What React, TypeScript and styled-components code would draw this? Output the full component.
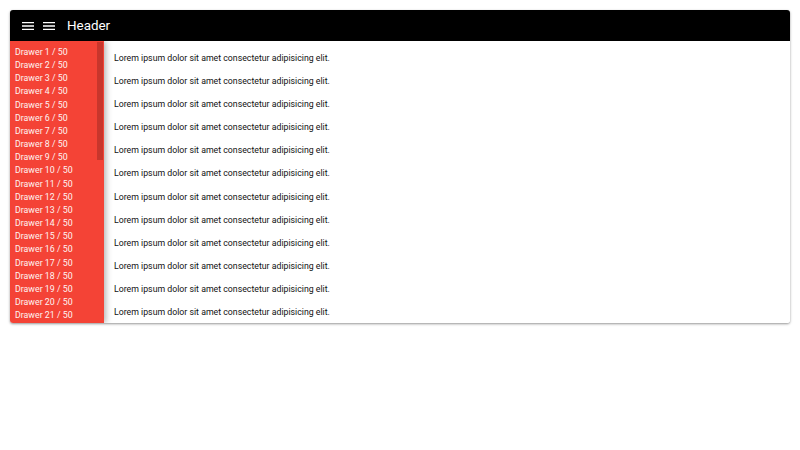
import React from "react";
import styled, { createGlobalStyle } from "styled-components";

const Global = createGlobalStyle`
  html, body { margin: 0; padding: 0; background: #fff; }
  body { font-family: Roboto, "Liberation Sans", sans-serif; }
`;

const Page = styled.div`
  padding: 10px;
`;

const Frame = styled.div`
  height: 313px;
  display: flex;
  flex-direction: column;
  border-radius: 3px;
  overflow: hidden;
  box-shadow: 0 1px 3px rgba(0,0,0,0.25), 0 1px 2px rgba(0,0,0,0.2);
`;

const Header = styled.header`
  height: 31px;
  flex: none;
  background: #000;
  color: #fff;
  display: flex;
  align-items: center;
  padding-left: 10px;
  gap: 5px;
`;

const IconBtn = styled.span`
  width: 16px;
  height: 16px;
  display: flex;
  align-items: center;
  justify-content: center;
`;

const Title = styled.h1`
  margin: 0 0 0 5px;
  font-size: 13.4px;
  font-weight: 400;
  line-height: 1;
`;

const Body = styled.div`
  flex: 1;
  display: flex;
  min-height: 0;
`;

const DrawerWrap = styled.div`
  width: 94px;
  flex: none;
  position: relative;
  z-index: 1;
  box-shadow: 2px 0 6px rgba(0,0,0,0.3);
`;

const Drawer = styled.nav`
  height: 100%;
  background: #f44336;
  color: #fdf3f2;
  overflow-y: auto;
  scrollbar-width: none;
  padding: 5px 0 4px 5px;
  box-sizing: border-box;
  &::-webkit-scrollbar { display: none; }
`;

const Thumb = styled.div`
  position: absolute;
  top: 1px;
  right: 1px;
  width: 6px;
  height: 118px;
  background: rgba(0,0,0,0.18);
`;

const DrawerItem = styled.div`
  font-size: 8.8px;
  line-height: 13.15px;
  white-space: nowrap;
`;

const Content = styled.main`
  flex: 1;
  overflow: hidden;
  padding: 6px 10px;
  background: #fff;
`;

const Line = styled.p`
  margin: 0;
  font-size: 8.75px;
  line-height: 23.1px;
  color: #111;
  white-space: nowrap;
`;

const Menu = () => (
  <svg width="16" height="16" viewBox="0 0 24 24" fill="#fff">
    <path d="M3 18h18v-2H3v2zm0-5h18v-2H3v2zm0-7v2h18V6H3z" />
  </svg>
);

export default function App() {
  return (
    <>
      <Global />
      <Page>
        <Frame>
          <Header>
            <IconBtn><Menu /></IconBtn>
            <IconBtn><Menu /></IconBtn>
            <Title>Header</Title>
          </Header>
          <Body>
            <DrawerWrap>
              <Drawer>
                {Array.from({ length: 50 }, (_, i) => (
                  <DrawerItem key={i}>Drawer {i + 1} / 50</DrawerItem>
                ))}
              </Drawer>
              <Thumb />
            </DrawerWrap>
            <Content>
              {Array.from({ length: 12 }, (_, i) => (
                <Line key={i}>Lorem ipsum dolor sit amet consectetur adipisicing elit.</Line>
              ))}
            </Content>
          </Body>
        </Frame>
      </Page>
    </>
  );
}
